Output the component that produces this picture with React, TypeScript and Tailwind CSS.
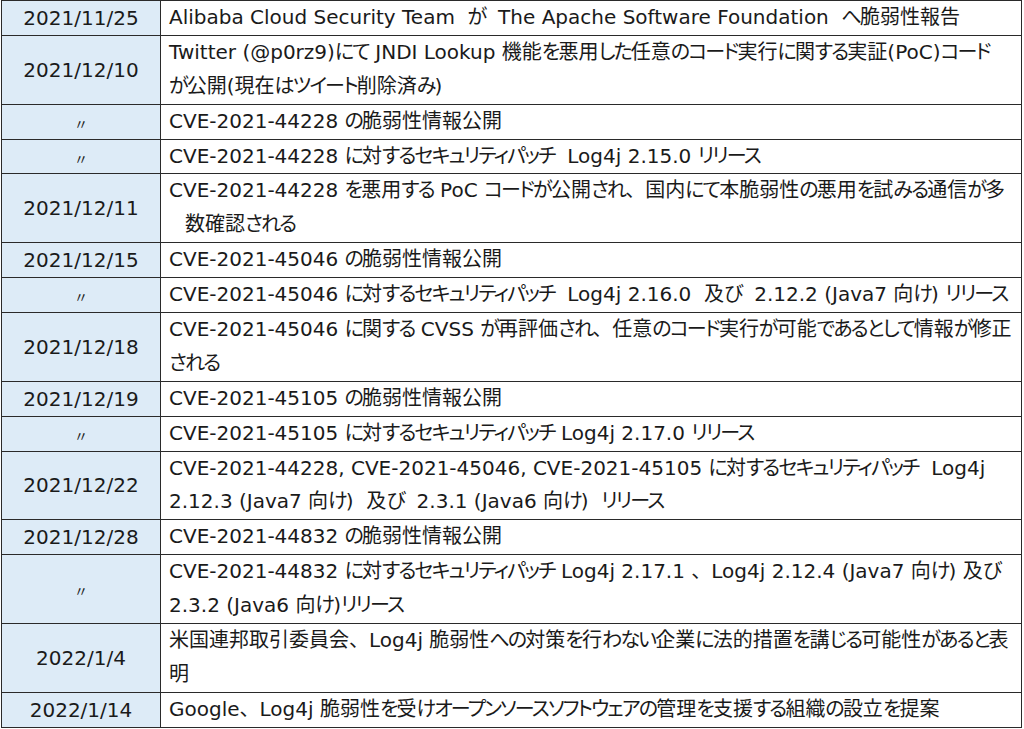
type Row = { date: string; lines: string[]; indent?: boolean };

const rows: Row[] = [
  { date: '2021/11/25', lines: ['Alibaba Cloud Security Team  が  The Apache Software Foundation  へ脆弱性報告'] },
  {
    date: '2021/12/10',
    lines: ['Twitter (@p0rz9)にて JNDI Lookup 機能を悪用した任意のコード実行に関する実証(PoC)コード', 'が公開(現在はツイート削除済み)'],
  },
  { date: '〃', lines: ['CVE-2021-44228 の脆弱性情報公開'] },
  { date: '〃', lines: ['CVE-2021-44228 に対するセキュリティパッチ  Log4j 2.15.0 リリース'] },
  {
    date: '2021/12/11',
    lines: ['CVE-2021-44228 を悪用する PoC コードが公開され、国内にて本脆弱性の悪用を試みる通信が多', '数確認される'],
    indent: true,
  },
  { date: '2021/12/15', lines: ['CVE-2021-45046 の脆弱性情報公開'] },
  { date: '〃', lines: ['CVE-2021-45046 に対するセキュリティパッチ  Log4j 2.16.0  及び  2.12.2 (Java7 向け) リリース'] },
  {
    date: '2021/12/18',
    lines: ['CVE-2021-45046 に関する CVSS が再評価され、任意のコード実行が可能であるとして情報が修正', 'される'],
  },
  { date: '2021/12/19', lines: ['CVE-2021-45105 の脆弱性情報公開'] },
  { date: '〃', lines: ['CVE-2021-45105 に対するセキュリティパッチ Log4j 2.17.0 リリース'] },
  {
    date: '2021/12/22',
    lines: ['CVE-2021-44228, CVE-2021-45046, CVE-2021-45105 に対するセキュリティパッチ  Log4j', '2.12.3 (Java7 向け)  及び  2.3.1 (Java6 向け)  リリース'],
  },
  { date: '2021/12/28', lines: ['CVE-2021-44832 の脆弱性情報公開'] },
  {
    date: '〃',
    lines: ['CVE-2021-44832 に対するセキュリティパッチ Log4j 2.17.1 、Log4j 2.12.4 (Java7 向け) 及び', '2.3.2 (Java6 向け)リリース'],
  },
  {
    date: '2022/1/4',
    lines: ['米国連邦取引委員会、Log4j 脆弱性への対策を行わない企業に法的措置を講じる可能性があると表', '明'],
  },
  { date: '2022/1/14', lines: ['Google、Log4j 脆弱性を受けオープンソースソフトウェアの管理を支援する組織の設立を提案'] },
];

// kana runs are set narrower, like the proportional kana of the original font
function Line({ text }: { text: string }) {
  const parts = text.split(/([\u3040-\u30ff]+)/);
  return (
    <>
      {parts.map((p, i) =>
        /[\u3040-\u30ff]/.test(p) ? (
          <span key={i} className="tracking-[-0.09em]" style={{ fontFeatureSettings: '"palt"' }}>
            {p}
          </span>
        ) : (
          <span key={i}>{p}</span>
        ),
      )}
    </>
  );
}

export default function App() {
  return (
    <div
      className="w-[1024px] h-[729px] bg-white text-[#1a1a1a] text-[20px]"
      style={{ fontFamily: '"DejaVu Sans", "Noto Sans CJK JP", sans-serif' }}
    >
      <table className="ml-[1px] w-[1021px] table-fixed border-collapse">
        <colgroup>
          <col className="w-[159px]" />
          <col />
        </colgroup>
        <tbody>
          {rows.map((r, i) => (
            <tr key={i}>
              <td className="border border-[#2a2a2a] bg-[#ddebf7] text-center align-middle">
                {r.date === '〃' ? <span className="text-[14px]">〃</span> : r.date}
              </td>
              <td className="border border-[#2a2a2a] pl-[8px]">
                {r.lines.map((l, j) => (
                  <div
                    key={j}
                    className={`h-[33.9px] leading-[33.9px] whitespace-pre ${j > 0 && r.indent ? 'pl-[16px]' : ''}`}
                  >
                    <Line text={l} />
                  </div>
                ))}
              </td>
            </tr>
          ))}
        </tbody>
      </table>
    </div>
  );
}
